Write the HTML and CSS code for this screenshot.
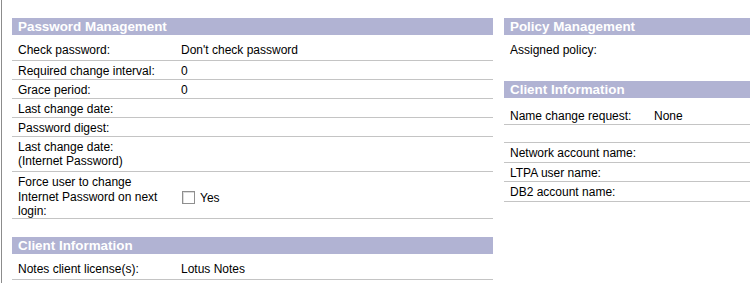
FILE: index.html
```html
<!DOCTYPE html>
<html>
<head>
<meta charset="utf-8">
<link rel="stylesheet" href="styles.css">
</head>
<body>
<div class="page">
  <div class="col col-left">
    <div class="section-head">Password Management</div>
    <div class="row first">
      <div class="label">Check password:</div>
      <div class="value">Don't check password</div>
    </div>
    <div class="row">
      <div class="label">Required change interval:</div>
      <div class="value">0</div>
    </div>
    <div class="row">
      <div class="label">Grace period:</div>
      <div class="value">0</div>
    </div>
    <div class="row">
      <div class="label">Last change date:</div>
      <div class="value"></div>
    </div>
    <div class="row">
      <div class="label">Password digest:</div>
      <div class="value"></div>
    </div>
    <div class="row two-line">
      <div class="label">Last change date:<br>(Internet Password)</div>
      <div class="value"></div>
    </div>
    <div class="row three-line">
      <div class="label">Force user to change<br>Internet Password on next<br>login:</div>
      <div class="value check-cell">
        <span class="checkbox"></span>
        <span class="check-text">Yes</span>
      </div>
    </div>

    <div class="section-head gap-top">Client Information</div>
    <div class="row first">
      <div class="label">Notes client license(s):</div>
      <div class="value">Lotus Notes</div>
    </div>
  </div>

  <div class="col col-right">
    <div class="section-head">Policy Management</div>
    <div class="row first no-line">
      <div class="label">Assigned policy:</div>
      <div class="value"></div>
    </div>

    <div class="section-head gap-top-right">Client Information</div>
    <div class="row first-right">
      <div class="label">Name change request:</div>
      <div class="value">None</div>
    </div>
    <div class="row empty"></div>
    <div class="row tall">
      <div class="label">Network account name:</div>
      <div class="value"></div>
    </div>
    <div class="row">
      <div class="label">LTPA user name:</div>
      <div class="value"></div>
    </div>
    <div class="row tall">
      <div class="label">DB2 account name:</div>
      <div class="value"></div>
    </div>
  </div>
</div>
</body>
</html>
```

FILE: styles.css
```css
html, body {
  margin: 0;
  padding: 0;
  background: #ffffff;
  overflow: hidden;
}

body {
  width: 750px;
  height: 283px;
  font-family: "Liberation Sans", Arial, sans-serif;
  font-size: 12px;
  line-height: 14px;
  color: #000000;
}

.page {
  display: flex;
  align-items: flex-start;
  gap: 11px;
  height: 283px;
  margin-left: 1px;
  border-left: 1px solid #8c8c8c;
  padding-top: 18px;
  box-sizing: border-box;
}

.col-left {
  margin-left: 10px;
  width: 481px;
  flex: none;
}

.col-right {
  width: 260px;
  flex: none;
}

.section-head {
  background: #b1b3d3;
  color: #ffffff;
  font-weight: bold;
  font-size: 13.4px;
  height: 17px;
  line-height: 16px;
  padding: 1px 0 0 6px;
  box-sizing: border-box;
  white-space: nowrap;
}

.gap-top {
  margin-top: 18px;
}

.gap-top-right {
  margin-top: 21px;
}

.row {
  display: flex;
  align-items: flex-start;
  padding: 3px 0 1px;
  border-bottom: 1px solid #c4c4c4;
}

.row.first {
  padding: 8px 0 3px;
}

.row.first-right {
  padding: 11px 0 1px;
}

.row.no-line {
  border-bottom: none;
}

.row.two-line {
  padding: 3px 0 3px;
}

.row.three-line {
  height: 47px;
  box-sizing: border-box;
  padding: 3px 0 0;
  line-height: 14.5px;
}

.row.empty {
  height: 18px;
  box-sizing: border-box;
  padding: 0;
}

.row.tall {
  padding: 3px 0 2px;
}

.label {
  flex: none;
  width: 169px;
  padding-left: 6px;
  box-sizing: border-box;
  white-space: nowrap;
}

.col-right .label {
  width: 150px;
}

.value {
  white-space: nowrap;
}

.check-cell {
  display: flex;
  align-items: flex-start;
  margin-top: 16px;
}

.checkbox {
  display: block;
  width: 13px;
  height: 13px;
  box-sizing: border-box;
  margin: 0 0 0 1px;
  border: 1px solid #8f8f8f;
  background: #ffffff;
  box-shadow: inset 1px 1px 0 #dcdcdc;
}

.check-text {
  margin-left: 5px;
  line-height: 14px;
  margin-top: 0;
}
```
